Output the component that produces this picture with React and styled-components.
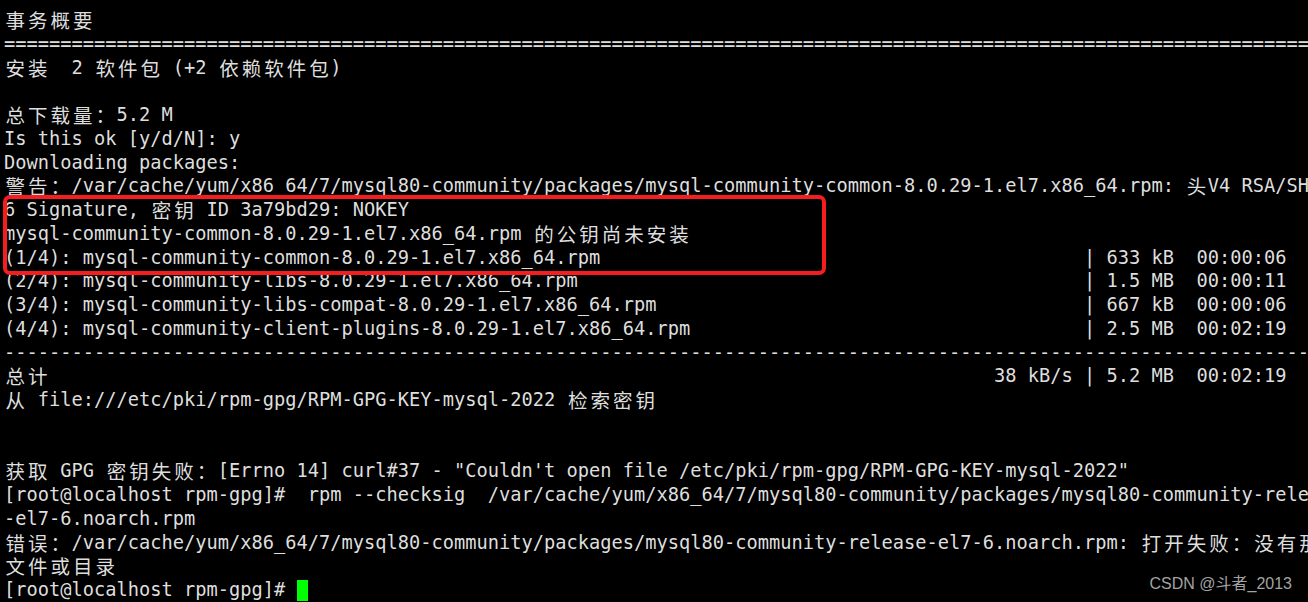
import styled, { createGlobalStyle } from "styled-components";

// one terminal cell, in px (DejaVu Sans Mono advance at 18.7px)
const CELL = 11.25;
const COLS = 119;

const GlobalStyle = createGlobalStyle`
  html, body {
    margin: 0;
    padding: 0;
    background: #000;
  }
  body {
    overflow: hidden;
  }
`;

const isWide = (ch) => {
    const c = ch.codePointAt(0);
    return (
        (c >= 0x1100 && c <= 0x115f) ||
        (c >= 0x2e80 && c <= 0xa4cf) ||
        (c >= 0xac00 && c <= 0xd7a3) ||
        (c >= 0xf900 && c <= 0xfaff) ||
        (c >= 0xfe30 && c <= 0xfe4f) ||
        (c >= 0xff00 && c <= 0xff60) ||
        (c >= 0xffe0 && c <= 0xffe6)
    );
};

const cols = (s) => [...s].reduce((n, ch) => n + (isWide(ch) ? 2 : 1), 0);

// yum pads the file name so the "|" column lines up
const row = (left, right, at = 96) =>
    left + " ".repeat(Math.max(1, at - cols(left))) + right;

const lines = [
    "事务概要",
    "=".repeat(COLS),
    "安装  2 软件包 (+2 依赖软件包)",
    "",
    "总下载量：5.2 M",
    "Is this ok [y/d/N]: y",
    "Downloading packages:",
    "警告：/var/cache/yum/x86_64/7/mysql80-community/packages/mysql-community-common-8.0.29-1.el7.x86_64.rpm: 头V4 RSA/SHA25",
    "6 Signature, 密钥 ID 3a79bd29: NOKEY",
    "mysql-community-common-8.0.29-1.el7.x86_64.rpm 的公钥尚未安装",
    row("(1/4): mysql-community-common-8.0.29-1.el7.x86_64.rpm", "| 633 kB  00:00:06"),
    row("(2/4): mysql-community-libs-8.0.29-1.el7.x86_64.rpm", "| 1.5 MB  00:00:11"),
    row("(3/4): mysql-community-libs-compat-8.0.29-1.el7.x86_64.rpm", "| 667 kB  00:00:06"),
    row("(4/4): mysql-community-client-plugins-8.0.29-1.el7.x86_64.rpm", "| 2.5 MB  00:02:19"),
    "-".repeat(COLS),
    row("总计", "38 kB/s | 5.2 MB  00:02:19", 88),
    "从 file:///etc/pki/rpm-gpg/RPM-GPG-KEY-mysql-2022 检索密钥",
    "",
    "",
    "获取 GPG 密钥失败：[Errno 14] curl#37 - \"Couldn't open file /etc/pki/rpm-gpg/RPM-GPG-KEY-mysql-2022\"",
    "[root@localhost rpm-gpg]#  rpm --checksig  /var/cache/yum/x86_64/7/mysql80-community/packages/mysql80-community-release",
    "-el7-6.noarch.rpm",
    "错误：/var/cache/yum/x86_64/7/mysql80-community/packages/mysql80-community-release-el7-6.noarch.rpm: 打开失败：没有那个",
    "文件或目录",
];

const splitRuns = (text) => {
    const runs = [];
    let buf = "";
    for (const ch of text) {
        if (isWide(ch)) {
            if (buf) runs.push({ wide: false, text: buf });
            buf = "";
            runs.push({ wide: true, text: ch });
        } else {
            buf += ch;
        }
    }
    if (buf) runs.push({ wide: false, text: buf });
    return runs;
};

const TermText = ({ text }) =>
    splitRuns(text).map((r, i) =>
        r.wide ? <Wide key={i}>{r.text}</Wide> : <span key={i}>{r.text}</span>
    );

const App = () => {
    return (
        <>
            <GlobalStyle />
            <Terminal>
                {lines.map((l, i) => (
                    <Line key={i}>
                        <TermText text={l} />
                    </Line>
                ))}
                <Line>
                    <TermText text="[root@localhost rpm-gpg]# " />
                    <Cursor />
                </Line>
                <Highlight />
                <Watermark>CSDN @斗者_2013</Watermark>
            </Terminal>
        </>
    );
};

const Terminal = styled.div`
    position: relative;
    width: 1308px;
    height: 602px;
    box-sizing: border-box;
    padding: 8px 0 0 4px;
    background: #000;
    color: #dedede;
    font-family: "DejaVu Sans Mono", "Liberation Mono", monospace;
    font-size: 18.7px;
    overflow: hidden;
`;

const Line = styled.div`
    display: flex;
    align-items: center;
    height: 23.75px;
    line-height: 23.75px;
    white-space: pre;

    & > * {
        flex-shrink: 0;
    }
`;

const Wide = styled.span`
    display: inline-block;
    width: ${CELL * 2}px;
    text-align: center;
    font-family: "Noto Sans CJK SC", "DejaVu Sans", sans-serif;
    font-size: 19.5px;
    line-height: 23.75px;
`;

const Cursor = styled.span`
    display: inline-block;
    width: ${CELL}px;
    height: 21px;
    margin-top: 2px;
    background: #00ff00;
`;

const Highlight = styled.div`
    position: absolute;
    left: 3px;
    top: 195px;
    width: 815px;
    height: 72px;
    border: 4px solid #f51d1d;
    border-radius: 7px;
    pointer-events: none;
`;

const Watermark = styled.div`
    position: absolute;
    right: 16px;
    bottom: 8px;
    color: #a3a3a3;
    font-family: "Liberation Sans", "Noto Sans CJK SC", sans-serif;
    font-size: 16px;
    line-height: 20px;
`;

export default App;
